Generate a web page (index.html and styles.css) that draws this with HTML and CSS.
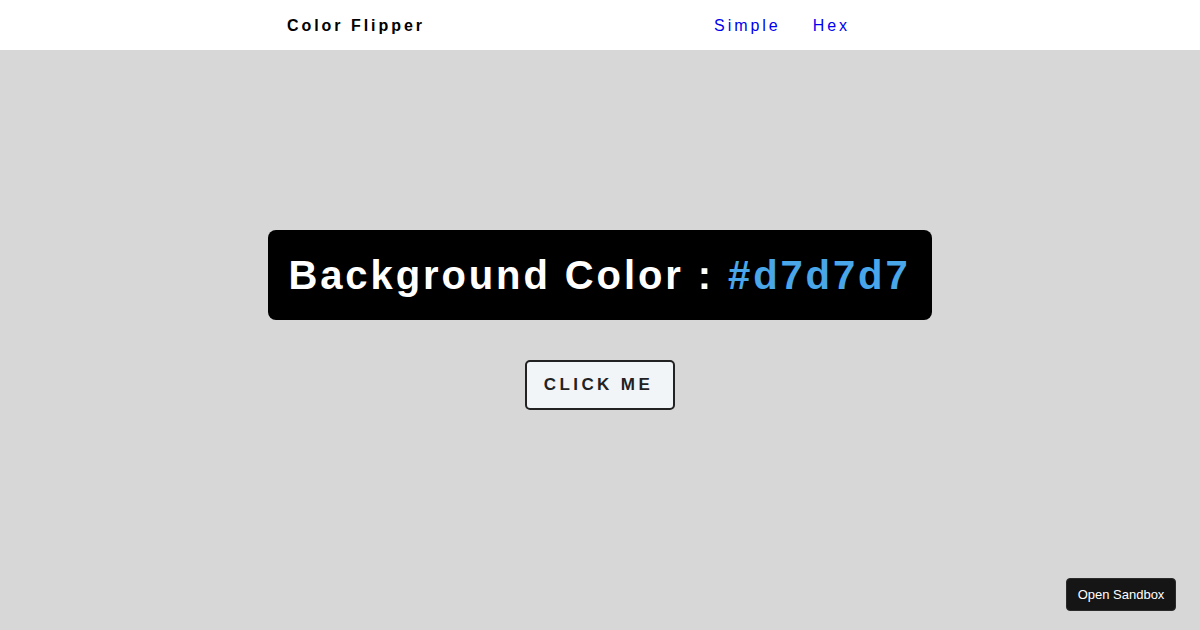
FILE: index.html
```html
<!DOCTYPE html>
<html lang="en">
<head>
<meta charset="utf-8">
<title>Color Flipper</title>
<link rel="stylesheet" href="styles.css">
</head>
<body>
<nav class="nav">
  <div class="nav-center">
    <h4 class="brand">Color Flipper</h4>
    <ul class="nav-links">
      <li><a href="#">Simple</a></li>
      <li><a href="#">Hex</a></li>
    </ul>
  </div>
</nav>
<main class="hero">
  <h2 class="title">Background Color : <span class="color">#d7d7d7</span></h2>
  <button class="btn-hero" type="button">click me</button>
</main>
<a class="sandbox" href="#">Open Sandbox</a>
</body>
</html>
```

FILE: styles.css
```css
* { box-sizing: border-box; }
html, body { margin: 0; padding: 0; }
body {
  background: #d7d7d7;
  font-family: "Liberation Sans", Arial, sans-serif;
  height: 630px;
  overflow: hidden;
  position: relative;
}
.nav {
  height: 50px;
  background: #ffffff;
  display: flex;
  align-items: center;
}
.nav-center {
  width: 563px;
  margin-left: 287px;
  padding-top: 2px;
  display: flex;
  align-items: center;
  justify-content: space-between;
}
.brand {
  margin: 0;
  font-size: 16px;
  font-weight: 700;
  letter-spacing: 2.95px;
  color: #000;
}
.nav-links {
  list-style: none;
  margin: 0;
  padding: 0;
  display: flex;
  gap: 32px;
}
.nav-links a {
  text-decoration: none;
  color: #0000ee;
  font-size: 16px;
  letter-spacing: 2.95px;
}
.hero {
  display: flex;
  flex-direction: column;
  align-items: center;
  padding-top: 180px;
  gap: 40px;
}
.title {
  margin: 0;
  background: #000;
  color: #fff;
  font-size: 40px;
  line-height: 50px;
  font-weight: 700;
  letter-spacing: 2.9px;
  padding: 20px 21px 20px 20px;
  border-radius: 8px;
  white-space: nowrap;
}
.color { color: #49a6e9; }
.btn-hero {
  height: 50px;
  padding: 0 20px 0 17px;
  background: #f1f5f8;
  border: 2px solid #222;
  border-radius: 5px;
  color: #222;
  font-family: "Liberation Sans", Arial, sans-serif;
  font-size: 17px;
  font-weight: 700;
  letter-spacing: 3.4px;
  text-transform: uppercase;
  cursor: pointer;
}
.sandbox {
  position: absolute;
  right: 24px;
  bottom: 19px;
  width: 110px;
  height: 33px;
  display: flex;
  align-items: center;
  justify-content: center;
  background: #151515;
  border: 1px solid #2a2a2a;
  border-radius: 4px;
  color: #fff;
  font-size: 13px;
  text-decoration: none;
}
```
